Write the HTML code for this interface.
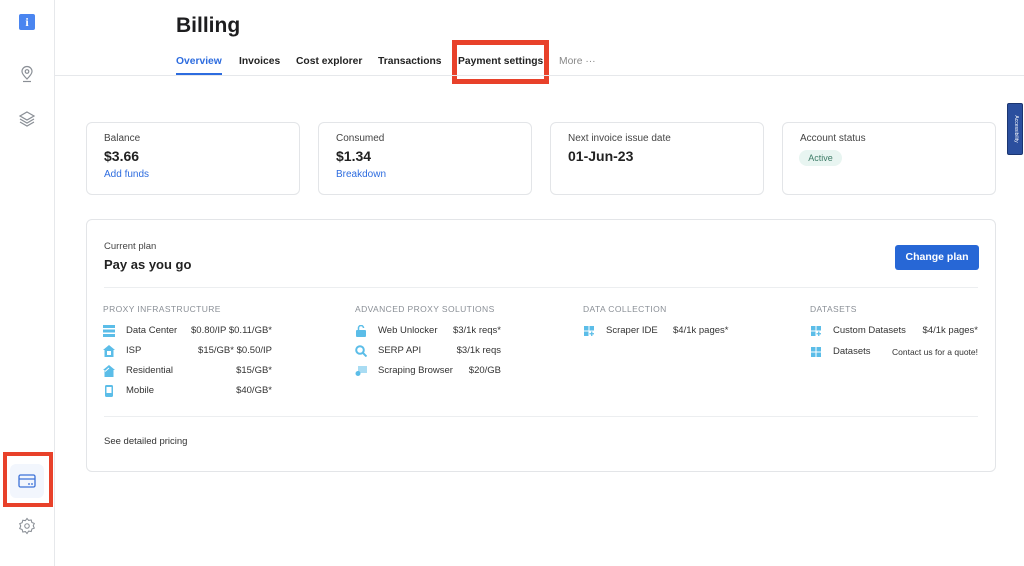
<!DOCTYPE html>
<html><head><meta charset="utf-8"><style>
*{box-sizing:border-box;margin:0;padding:0}
body{width:1024px;height:566px;background:#fff;font-family:"Liberation Sans",sans-serif;color:#222;position:relative;overflow:hidden}
.sb{position:absolute;left:0;top:0;width:55px;height:566px;border-right:1px solid #e6e8eb}
.abs{position:absolute}
.hdr{position:absolute;left:55px;right:0;top:75px;border-top:1px solid #e6e8eb}
h1{position:absolute;left:176px;top:14px;font-size:21px;font-weight:bold;color:#1d1d1f}
.tab{position:absolute;top:56px;font-size:10.3px;font-weight:bold;color:#222;white-space:nowrap}
.card{position:absolute;border:1px solid #e3e5e8;border-radius:6px;background:#fff}
.lbl{position:absolute;left:17px;top:10px;font-size:10px;color:#444}
.val{position:absolute;left:17px;top:25px;font-size:14px;font-weight:bold;color:#222}
.lnk{position:absolute;left:17px;top:46px;font-size:10px;color:#2d6cdf}
.sec{position:absolute;font-size:8.5px;color:#8a8f96;letter-spacing:.4px}
.row{position:absolute;font-size:9.5px;color:#333;height:14px;line-height:14px}
.row .ic{position:absolute;left:0;top:1px;width:12px;height:12px}
.row .n{position:absolute;left:23px}
.row .p{position:absolute;right:0;white-space:nowrap}
</style></head><body>
<div class="sb"></div>
<div class="abs" style="left:19px;top:14px;width:16px;height:16px;background:#4a85f0;border-radius:2px;color:#fff;font-size:12px;font-weight:bold;text-align:center;line-height:16px;font-family:'Liberation Serif',serif">i</div>
<svg class="abs" style="left:19px;top:65px" width="16" height="18" viewBox="0 0 16 18" fill="none" stroke="#8a8f96" stroke-width="1.2"><path d="M8 14C5 11 3 8.5 3 6.5a5 5 0 0110 0C13 8.5 11 11 8 14z"/><circle cx="8" cy="6.5" r="1.8"/><path d="M4 16.5h8"/></svg>
<svg class="abs" style="left:18px;top:110px" width="18" height="18" viewBox="0 0 18 18" fill="none" stroke="#8a8f96" stroke-width="1.2"><path d="M9 2l7 4-7 4-7-4z"/><path d="M2 9l7 4 7-4"/><path d="M2 12l7 4 7-4"/></svg>
<div class="abs" style="left:3px;top:452px;width:50px;height:55px;border:4px solid #e8412a"></div>
<div class="abs" style="left:10px;top:464px;width:34px;height:34px;background:#f2f6fd;border-radius:6px"></div>
<svg class="abs" style="left:18px;top:474px" width="18" height="14" viewBox="0 0 18 14" fill="none" stroke="#3d72d8" stroke-width="1.3"><rect x="1" y="1" width="16" height="12" rx="1.5"/><path d="M1 5h16M10 10h2M13 10h2"/></svg>
<svg class="abs" style="left:18px;top:517px" width="18" height="18" viewBox="0 0 24 24" fill="none" stroke="#8a8f96" stroke-width="1.4"><circle cx="12" cy="12" r="3"/><path d="M12 2l2.2 2.6 3.4-.6.9 3.3 3.2 1.3-1.4 3.1 1.4 3.1-3.2 1.3-.9 3.3-3.4-.6L12 22l-2.2-2.6-3.4.6-.9-3.3-3.2-1.3L3.7 12 2.3 8.9l3.2-1.3.9-3.3 3.4.6z"/></svg>
<h1>Billing</h1>
<div class="tab" style="left:176px;color:#2d6cdf">Overview</div>
<div class="abs" style="left:176px;top:73px;width:46px;height:2px;background:#2d6cdf"></div>
<div class="tab" style="left:239px">Invoices</div>
<div class="tab" style="left:296px">Cost explorer</div>
<div class="tab" style="left:378px">Transactions</div>
<div class="tab" style="left:458px">Payment settings</div>
<div class="tab" style="left:559px;color:#888;font-weight:normal">More ···</div>
<div class="abs" style="left:452px;top:40px;width:97px;height:44px;border:5px solid #e8412a"></div>
<div class="hdr"></div>
<div class="abs" style="left:1007px;top:103px;width:16px;height:52px;background:#2b4f9e;border:1px solid #1b3570;border-radius:2px"><div style="color:#fff;font-size:5px;transform:rotate(90deg);position:absolute;left:-14px;top:22px;width:44px;text-align:center">Accessibility</div></div>

<div class="card" style="left:86px;top:122px;width:214px;height:73px"><div class="lbl">Balance</div><div class="val">$3.66</div><div class="lnk">Add funds</div></div>
<div class="card" style="left:318px;top:122px;width:214px;height:73px"><div class="lbl">Consumed</div><div class="val">$1.34</div><div class="lnk">Breakdown</div></div>
<div class="card" style="left:550px;top:122px;width:214px;height:73px"><div class="lbl">Next invoice issue date</div><div class="val">01-Jun-23</div></div>
<div class="card" style="left:782px;top:122px;width:214px;height:73px"><div class="lbl">Account status</div><div class="abs" style="left:16px;top:27px;width:43px;height:16px;background:#e8f5f1;border-radius:8px;font-size:9px;color:#3f7d68;text-align:center;line-height:16px">Active</div></div>

<div class="card" style="left:86px;top:219px;width:910px;height:253px">
<div class="abs" style="left:17px;top:21px;font-size:9.5px;color:#444">Current plan</div>
<div class="abs" style="left:17px;top:37px;font-size:13px;font-weight:bold;color:#222">Pay as you go</div>
<div class="abs" style="left:808px;top:25px;width:84px;height:25px;background:#2767d6;border-radius:3px;color:#fff;font-size:10.5px;font-weight:bold;text-align:center;line-height:25px">Change plan</div>
<div class="abs" style="left:17px;right:17px;top:67px;border-top:1px solid #eceef0"></div>
<div class="abs" style="left:17px;right:17px;top:196px;border-top:1px solid #eceef0"></div>
<div class="abs" style="left:17px;top:216px;font-size:9.5px;color:#333">See detailed pricing</div>
</div>

<div class="sec" style="left:103px;top:304px">PROXY INFRASTRUCTURE</div>
<div class="sec" style="left:355px;top:304px">ADVANCED PROXY SOLUTIONS</div>
<div class="sec" style="left:583px;top:304px">DATA COLLECTION</div>
<div class="sec" style="left:810px;top:304px">DATASETS</div>

<div class="row" style="left:103px;top:324px;width:169px"><div class="ic" style="background:repeating-linear-gradient(#5bbde8 0 3px,#fff 3px 4.5px)"></div><span class="n">Data Center</span><span class="p">$0.80/IP $0.11/GB*</span></div>
<div class="row" style="left:103px;top:344px;width:169px"><svg class="ic" viewBox="0 0 12 12"><path d="M6 0L0 5h1.5v7h9V5H12z" fill="#5bbde8"/><rect x="4" y="6" width="4" height="4" fill="#fff"/></svg><span class="n">ISP</span><span class="p">$15/GB* $0.50/IP</span></div>
<div class="row" style="left:103px;top:364px;width:169px"><svg class="ic" viewBox="0 0 12 12"><path d="M6 0L0 5h1.5v7h9V5H12z" fill="#5bbde8"/><path d="M6 3L2 6.5" stroke="#fff"/></svg><span class="n">Residential</span><span class="p">$15/GB*</span></div>
<div class="row" style="left:103px;top:384px;width:169px"><svg class="ic" viewBox="0 0 12 12"><rect x="2" y="0" width="8" height="12" rx="1.5" fill="#5bbde8"/><rect x="3.5" y="2" width="5" height="6" fill="#fff"/></svg><span class="n">Mobile</span><span class="p">$40/GB*</span></div>

<div class="row" style="left:355px;top:324px;width:146px"><svg class="ic" viewBox="0 0 12 12"><rect x="1" y="5" width="10" height="7" rx="1" fill="#5bbde8"/><path d="M3.5 5V3a2.5 2.5 0 015 0" stroke="#5bbde8" fill="none" stroke-width="1.5"/></svg><span class="n">Web Unlocker</span><span class="p">$3/1k reqs*</span></div>
<div class="row" style="left:355px;top:344px;width:146px"><svg class="ic" viewBox="0 0 12 12"><circle cx="5" cy="5" r="3.8" stroke="#5bbde8" stroke-width="2" fill="none"/><path d="M8 8l3.5 3.5" stroke="#5bbde8" stroke-width="2"/></svg><span class="n">SERP API</span><span class="p">$3/1k reqs</span></div>
<div class="row" style="left:355px;top:364px;width:146px"><svg class="ic" viewBox="0 0 12 12"><rect x="3" y="1" width="9" height="7" fill="#a9dcf3"/><circle cx="3" cy="8.5" r="2.5" fill="#5bbde8"/></svg><span class="n">Scraping Browser</span><span class="p">$20/GB</span></div>

<div class="row" style="left:583px;top:324px;width:146px"><svg class="ic" viewBox="0 0 12 12" fill="#5bbde8"><rect x="1" y="1" width="4.5" height="4.5"/><rect x="6.5" y="1" width="4.5" height="4.5"/><rect x="1" y="6.5" width="4.5" height="4.5"/><path d="M8.75 6.5v4.5M6.5 8.75h4.5" stroke="#5bbde8" stroke-width="1.3"/></svg><span class="n">Scraper IDE</span><span class="p" style="left:90px;right:auto">$4/1k pages*</span></div>
<div class="row" style="left:810px;top:324px;width:168px"><svg class="ic" viewBox="0 0 12 12" fill="#5bbde8"><rect x="1" y="1" width="4.5" height="4.5"/><rect x="6.5" y="1" width="4.5" height="4.5"/><rect x="1" y="6.5" width="4.5" height="4.5"/><path d="M8.75 6.5v4.5M6.5 8.75h4.5" stroke="#5bbde8" stroke-width="1.3"/></svg><span class="n">Custom Datasets</span><span class="p">$4/1k pages*</span></div>
<div class="row" style="left:810px;top:345px;width:168px"><svg class="ic" viewBox="0 0 12 12" fill="#5bbde8"><rect x="1" y="1" width="4.5" height="4.5"/><rect x="6.5" y="1" width="4.5" height="4.5"/><rect x="1" y="6.5" width="4.5" height="4.5"/><rect x="6.5" y="6.5" width="4.5" height="4.5"/></svg><span class="n">Datasets</span><span class="p" style="font-size:8.5px">Contact us for a quote!</span></div>
</body></html>
